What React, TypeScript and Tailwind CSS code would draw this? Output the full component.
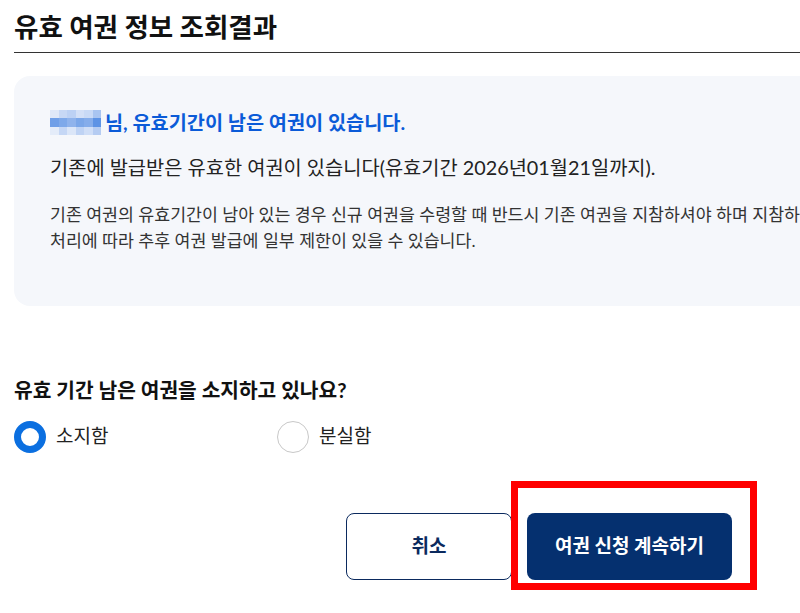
import React from 'react';

const font = { fontFamily: 'Lato, "Noto Sans CJK KR", sans-serif' };

// blurred name mosaic
const mosaic = [
  ['#dfe8f8', '#c7d8f5', '#bcd1f4', '#d3e0f7', '#c9daf6', '#a9c5f1'],
  ['#6f9fe8', '#7ea9ea', '#8fb3ec', '#7ba7e9', '#85adeb', '#5d93e5'],
  ['#e4ecf9', '#c5d7f5', '#dbe6f8', '#bfd3f4', '#cfdef7', '#b5ccf2'],
];

export default function App() {
  return (
    <div className="w-[800px] h-[613px] overflow-hidden bg-white relative" style={font}>
      <div className="w-[1100px] pl-[14px]">
        {/* Title */}
        <div className="w-[786px] border-b border-[#333] pt-[14px] pb-[11px]">
          <h1 className="text-[26.5px] font-bold text-[#111] leading-none">유효 여권 정보 조회결과</h1>
        </div>

        {/* Info box */}
        <div className="mt-[23px] bg-[#f5f7fb] rounded-[16px] h-[230px] pl-[36px] pt-[32px]">
          <div className="flex items-center h-[30px]">
            <div className="grid grid-cols-6 w-[51px] h-[25px]">
              {mosaic.flat().map((c, i) => (
                <div key={i} style={{ backgroundColor: c }} />
              ))}
            </div>
            <span className="ml-[4px] text-[19.7px] leading-[30px] font-bold text-[#0b5bd8]">
              님, 유효기간이 남은 여권이 있습니다.
            </span>
          </div>
          <p className="mt-[15px] text-[19.8px] leading-[28px] text-[#222]">
            기존에 발급받은 유효한 여권이 있습니다(유효기간 2026년01월21일까지).
          </p>
          <p className="mt-[21px] text-[17.3px] leading-[26px] text-[#333] whitespace-nowrap">
            기존 여권의 유효기간이 남아 있는 경우 신규 여권을 수령할 때 반드시 기존 여권을 지참하셔야 하며 지참하지 않을 경우 기존 여권은 분실
            <br />
            처리에 따라 추후 여권 발급에 일부 제한이 있을 수 있습니다.
          </p>
        </div>

        {/* Question */}
        <h2 className="mt-[70px] text-[20.3px] leading-[28px] font-bold text-[#111]">
          유효 기간 남은 여권을 소지하고 있나요?
        </h2>
        <div className="mt-[17px] flex items-center h-[32px]">
          <label className="flex items-center w-[263px]">
            <span className="w-[32px] h-[32px] rounded-full border-[7px] border-[#0b6fe0] bg-white" />
            <span className="ml-[10px] text-[19px] text-[#222]">소지함</span>
          </label>
          <label className="flex items-center">
            <span className="w-[32px] h-[32px] rounded-full border border-[#c8c8c8] bg-white" />
            <span className="ml-[10px] text-[19px] text-[#222]">분실함</span>
          </label>
        </div>

        {/* Buttons */}
        <div className="mt-[60px] flex pl-[332px] gap-[15px]">
          <button className="w-[166px] h-[67px] rounded-[8px] border border-[#0b2a5e] bg-white text-[19px] font-bold text-[#0b2a5e]">
            취소
          </button>
          <button className="w-[205px] h-[67px] rounded-[8px] bg-[#05306f] text-[19px] font-bold text-white">
            여권 신청 계속하기
          </button>
        </div>
      </div>

      {/* annotation */}
      <div className="absolute left-[511px] top-[481px] w-[246px] h-[109px] border-[7px] border-[#ff0000]" />
    </div>
  );
}
